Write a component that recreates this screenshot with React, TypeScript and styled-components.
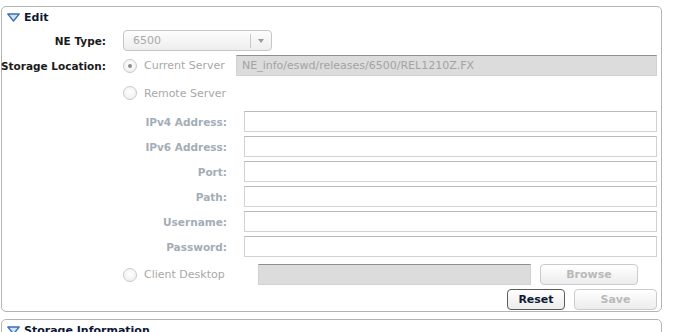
import { Fragment } from "react";
import styled, { createGlobalStyle } from "styled-components";

const Global = createGlobalStyle`
  html, body { margin: 0; padding: 0; background: #fff; }
  body { font-family: "DejaVu Sans", Verdana, sans-serif; font-size: 11px; }
`;

const Page = styled.div`
  padding: 6px 13px 0 1px;
  display: flex;
  flex-direction: column;
  gap: 7px;
`;

const Panel = styled.section`
  border: 1px solid #b4b4b4;
  border-radius: 5px;
  padding: 1px 4px 1px 1px;
`;

const Header = styled.div`
  display: flex;
  align-items: center;
  gap: 4px;
  height: 18px;
  padding-left: 4px;
  font-weight: bold;
  color: #0c1833;
`;

const Form = styled.div`
  display: grid;
  grid-template-columns: 103px 1fr;
  column-gap: 17px;
  row-gap: 4px;
  margin-top: 4px;
`;

const Label = styled.div<{ $muted?: boolean }>`
  display: flex;
  justify-content: flex-end;
  align-items: center;
  height: 21px;
  white-space: nowrap;
  font-weight: bold;
  font-size: 10.5px;
  color: ${(p) => (p.$muted ? "#a3adb7" : "#1b1b1b")};
`;

const Select = styled.div`
  width: 149px;
  height: 21px;
  box-sizing: border-box;
  border: 1px solid #c6c6c6;
  border-radius: 4px;
  background: linear-gradient(#fdfdfd, #eeeeee);
  display: flex;
  align-items: center;
  color: #a9a9a9;
  font-size: 11px;
`;

const SelectValue = styled.span`
  flex: 1;
  padding-left: 9px;
`;

const SelectArrow = styled.span`
  width: 20px;
  height: 14px;
  border-left: 1px solid #c8c8c8;
  display: flex;
  align-items: center;
  justify-content: center;
  &::after {
    content: "";
    border-left: 3px solid transparent;
    border-right: 3px solid transparent;
    border-top: 4px solid #9a9a9a;
  }
`;

const Options = styled.div`
  display: flex;
  flex-direction: column;
`;

const OptionRow = styled.div<{ $h: number }>`
  display: flex;
  align-items: center;
  height: ${(p) => p.$h}px;
`;

const Radio = styled.span<{ $checked?: boolean }>`
  width: 14px;
  height: 14px;
  box-sizing: border-box;
  border-radius: 50%;
  border: 1px solid #c9c9c9;
  background: radial-gradient(circle at 50% 40%, #ffffff, #ececec);
  display: flex;
  align-items: center;
  justify-content: center;
  flex: none;
  &::after {
    content: "";
    display: ${(p) => (p.$checked ? "block" : "none")};
    width: 4px;
    height: 4px;
    border-radius: 50%;
    background: #8c8c8c;
  }
`;

const OptionText = styled.span<{ $w: number }>`
  color: #a8a8a8;
  margin-left: 7px;
  width: ${(p) => p.$w}px;
  flex: none;
  white-space: nowrap;
`;

const Field = styled.div<{ $disabled?: boolean }>`
  flex: 1;
  height: 21px;
  box-sizing: border-box;
  border: 1px solid #d2d2d2;
  border-top-color: ${(p) => (p.$disabled ? "#8f8f8f" : "#b9b9b9")};
  background: ${(p) => (p.$disabled ? "#dcdcdc" : "#fff")};
  color: #a3a3a3;
  font-size: 11px;
  padding-left: 5px;
  display: flex;
  align-items: center;
`;

const SubForm = styled.div`
  display: grid;
  grid-template-columns: 104px 1fr;
  column-gap: 17px;
  row-gap: 4px;
  padding: 1px 0 7px;
`;

const Button = styled.button<{ $w: number; $active?: boolean }>`
  width: ${(p) => p.$w}px;
  height: 21px;
  box-sizing: border-box;
  border-radius: 4px;
  border: 1px solid ${(p) => (p.$active ? "#5b5b5b" : "#cbcbcb")};
  background: linear-gradient(#ffffff, #ececec);
  font-family: "DejaVu Sans", Verdana, sans-serif;
  font-weight: bold;
  font-size: 11px;
  color: ${(p) => (p.$active ? "#0e1a33" : "#b9b9b9")};
  padding: 0;
`;

const BrowseButton = styled(Button)`
  margin: 0 19px 0 9px;
`;

const Actions = styled.div`
  display: flex;
  justify-content: flex-end;
  gap: 9px;
  margin-top: 4px;
`;

const Triangle = () => (
  <svg width="13" height="9" viewBox="0 0 13 9">
    <path d="M0.8 1 L12.2 1 L6.5 8 Z" fill="#cfe3f7" stroke="#3b6fb5" strokeWidth="1.3" strokeLinejoin="round" />
  </svg>
);

const remote = ["IPv4 Address:", "IPv6 Address:", "Port:", "Path:", "Username:", "Password:"];

export default function App() {
  return (
    <>
      <Global />
      <Page>
        <Panel>
          <Header>
            <Triangle />
            Edit
          </Header>
          <Form>
            <Label>NE Type:</Label>
            <Select>
              <SelectValue>6500</SelectValue>
              <SelectArrow />
            </Select>
            <Label>Storage Location:</Label>
            <Options>
              <OptionRow $h={21}>
                <Radio $checked />
                <OptionText $w={92}>Current Server</OptionText>
                <Field $disabled>NE_info/eswd/releases/6500/REL1210Z.FX</Field>
              </OptionRow>
              <OptionRow $h={34}>
                <Radio />
                <OptionText $w={92}>Remote Server</OptionText>
              </OptionRow>
              <SubForm>
                {remote.map((l) => (
                  <Fragment key={l}>
                    <Label $muted>{l}</Label>
                    <Field />
                  </Fragment>
                ))}
              </SubForm>
              <OptionRow $h={21}>
                <Radio />
                <OptionText $w={114}>Client Desktop</OptionText>
                <Field $disabled />
                <BrowseButton $w={98}>Browse</BrowseButton>
              </OptionRow>
            </Options>
          </Form>
          <Actions>
            <Button $w={58} $active>Reset</Button>
            <Button $w={83}>Save</Button>
          </Actions>
        </Panel>
        <Panel>
          <Header>
            <Triangle />
            Storage Information
          </Header>
        </Panel>
      </Page>
    </>
  );
}
